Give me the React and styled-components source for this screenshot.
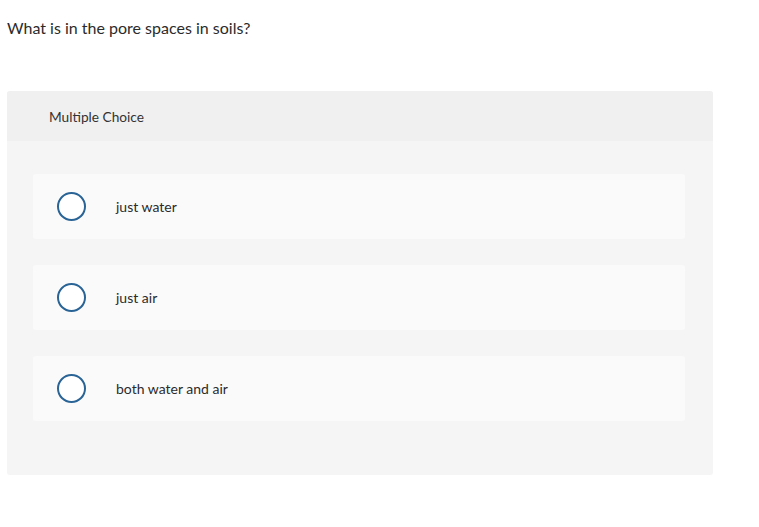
import React from 'react';
import styled, {createGlobalStyle} from 'styled-components';

const GlobalStyle = createGlobalStyle`
    body {
        margin: 0;
        background: #ffffff;
        font-family: Lato, "Open Sans", sans-serif;
        color: #333333;
    }
`;

const choices = ['just water', 'just air', 'both water and air'];

function App() {
    return (
        <Page>
            <GlobalStyle/>
            <Question>What is in the pore spaces in soils?</Question>
            <Panel>
                <PanelHeader>Multiple Choice</PanelHeader>
                <ChoiceList>
                    {choices.map((label) => (
                        <Choice key={label}>
                            <Radio/>
                            <ChoiceLabel>{label}</ChoiceLabel>
                        </Choice>
                    ))}
                </ChoiceList>
            </Panel>
        </Page>
    )
}

export default App

const Page = styled.div`
    padding: 19px 46px 0 7px;
`;

const Question = styled.p`
    margin: 0 0 54px 0;
    font-size: 16px;
    line-height: 18px;
    color: #2b2b2b;
`;

const Panel = styled.div`
    background-color: #f5f5f5;
    border-radius: 3px;
    width: 706px;
    height: 384px;
    overflow: hidden;
`;

const PanelHeader = styled.div`
    background-color: #f0f0f0;
    height: 50px;
    display: flex;
    align-items: center;
    padding-left: 42px;
    font-size: 13.7px;
    color: #333333;
`;

const ChoiceList = styled.div`
    display: flex;
    flex-direction: column;
    gap: 26px;
    padding: 33px 28px 0 26px;
`;

const Choice = styled.div`
    display: flex;
    align-items: center;
    height: 65px;
    background-color: #fafafa;
    border-radius: 3px;
    padding-left: 24px;
`;

const Radio = styled.span`
    box-sizing: border-box;
    width: 29px;
    height: 29px;
    border: 2px solid #2a6496;
    border-radius: 50%;
    background: #ffffff;
    flex-shrink: 0;
`;

const ChoiceLabel = styled.span`
    margin-left: 30px;
    font-size: 14px;
    color: #2b2b2b;
`;
